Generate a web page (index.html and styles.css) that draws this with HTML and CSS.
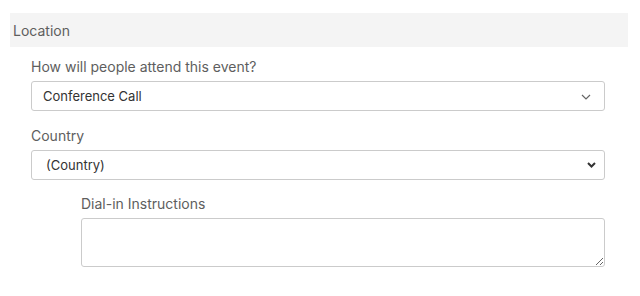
FILE: index.html
```html
<!DOCTYPE html>
<html>
<head>
<meta charset="utf-8">
<link rel="stylesheet" href="styles.css">
</head>
<body>
<div class="page">
  <div class="section-head">Location</div>
  <div class="fields">
    <div class="field">
      <div class="label">How will people attend this event?</div>
      <div class="select">
        <span>Conference Call</span>
        <svg class="chev-thin" width="10" height="6" viewBox="0 0 10 6"><path d="M1 1 L5 5 L9 1" fill="none" stroke="#666" stroke-width="1.2"/></svg>
      </div>
    </div>
    <div class="field">
      <div class="label">Country</div>
      <div class="select native">
        <span>(Country)</span>
        <svg class="chev-bold" width="9" height="6" viewBox="0 0 9 6"><path d="M1 1 L4.5 4.5 L8 1" fill="none" stroke="#333" stroke-width="2"/></svg>
      </div>
    </div>
    <div class="field indented">
      <div class="label">Dial-in Instructions</div>
      <textarea class="textarea"></textarea>
    </div>
  </div>
</div>
</body>
</html>
```

FILE: styles.css
```css
* { box-sizing: border-box; }
html, body { margin: 0; padding: 0; background: #fff; }
body { font-family: Inter, "Noto Sans", sans-serif; }
.page { padding: 13px 12px 0 10px; }
.section-head {
  background: #f4f4f4;
  height: 34px;
  display: flex;
  align-items: center;
  padding-left: 3px;
  font-size: 14px;
  color: #5e5e5e;
}
.fields { padding: 11px 23px 0 21px; display: flex; flex-direction: column; gap: 16px; }
.field { display: flex; flex-direction: column; gap: 6px; }
.field.indented { padding-left: 50px; margin-top: -1px; }
.label { font-size: 14px; line-height: 17px; color: #5e5e5e; }
.select {
  height: 30px;
  border: 1px solid #cbcbcb;
  border-radius: 3px;
  display: flex;
  align-items: center;
  justify-content: space-between;
  padding: 0 13px 0 11px;
  font-size: 13px;
  color: #333;
}
.select.native { padding: 0 8px 0 14px; }
.chev-thin { margin-top: 1px; }
.textarea {
  height: 49px;
  border: 1px solid #cbcbcb;
  border-radius: 3px;
  resize: vertical;
  width: 100%;
  font-family: inherit;
  margin: 0;
  display: block;
}
```
